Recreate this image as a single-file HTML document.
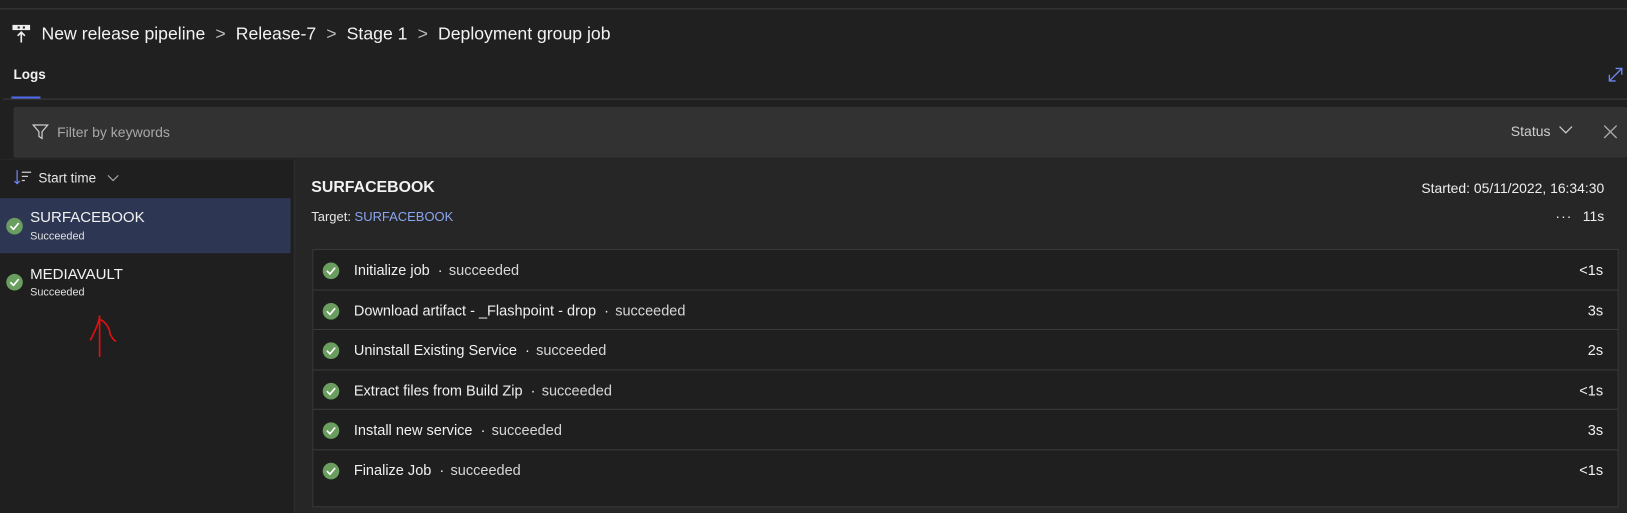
<!DOCTYPE html>
<html><head><meta charset="utf-8"><style>
*{box-sizing:border-box;margin:0;padding:0}
body{width:1627px;height:510px;background:#202020;font-family:"Segoe UI","Liberation Sans",sans-serif;color:#e6e6e6;overflow:hidden}
#c{position:relative;width:1568px;height:492px;transform:scale(1.03763);transform-origin:0 0}
.abs{position:absolute}
.ck{position:absolute;width:16px;height:16px;border-radius:50%;background:#6a9e5f}
.ck svg{position:absolute;left:3px;top:4px}
.row{position:absolute;left:302px;width:1257px;height:38.5px;border-bottom:1px solid #3a3a3a}
.row .n{position:absolute;left:39px;top:11px;font-size:14px;color:#f0f0f0}
.row .n span{color:#d6d6d6;margin-left:6px}
.row .t{position:absolute;right:14px;top:11px;font-size:14px;color:#f0f0f0}
.row .ck{left:9px;top:12px}
</style></head><body><div id="c">
<div class="abs" style="left:0;top:8px;width:1568px;height:1px;background:#3a3a3a"></div>
<svg class="abs" style="left:11px;top:23px" width="20" height="20" viewBox="0 0 20 20"><rect x="1" y="1" width="17" height="5" fill="#eee"/><rect x="6" y="2.5" width="2" height="2" fill="#202020"/><rect x="11" y="2.5" width="2" height="2" fill="#202020"/><path d="M9.5 18V8M6 11.5l3.5-3.5 3.5 3.5" stroke="#eee" stroke-width="1.6" fill="none"/></svg>
<div class="abs" style="left:40px;top:23px;font-size:17px;color:#f2f2f2;white-space:nowrap">New release pipeline <span style="color:#bbb;margin:0 5px">&gt;</span> Release-7 <span style="color:#bbb;margin:0 5px">&gt;</span> Stage 1 <span style="color:#bbb;margin:0 5px">&gt;</span> Deployment group job</div>
<div class="abs" style="left:13px;top:64px;font-size:13px;font-weight:bold;color:#f2f2f2">Logs</div>
<div class="abs" style="left:11px;top:93px;width:28px;height:2px;background:#4f6bed"></div>
<div class="abs" style="left:3px;top:95px;width:1565px;height:1px;background:#3c3c3c"></div>
<svg class="abs" style="left:1549px;top:64px" width="16" height="16" viewBox="0 0 16 16"><path d="M2 14L14 2M8 2h6v6M2 8v6h6" stroke="#6c86f0" stroke-width="1.3" fill="none"/></svg>
<div class="abs" style="left:13px;top:103px;width:1555px;height:49px;background:#323232;border-radius:2px"></div>
<svg class="abs" style="left:31px;top:119px" width="16" height="16" viewBox="0 0 16 16"><path d="M1 1.5h14L9.5 8v6.5L6.5 12.5V8z" stroke="#ccc" stroke-width="1.2" fill="none"/></svg>
<div class="abs" style="left:55px;top:120px;font-size:13.5px;color:#a8a8a8">Filter by keywords</div>
<div class="abs" style="left:1456px;top:119px;font-size:13.5px;color:#cfcfcf">Status</div>
<svg class="abs" style="left:1502px;top:120px" width="14" height="10" viewBox="0 0 14 10"><path d="M1 2l6 6 6-6" stroke="#ccc" stroke-width="1.2" fill="none"/></svg>
<svg class="abs" style="left:1545px;top:120px" width="14" height="14" viewBox="0 0 14 14"><path d="M1 1l12 12M13 1L1 13" stroke="#aaa" stroke-width="1.3"/></svg>
<div class="abs" style="left:0;top:153px;width:1568px;height:1px;background:#2a2a2a"></div>
<div class="abs" style="left:0;top:154px;width:283px;height:340px;background:#1f1f1f"></div>
<div class="abs" style="left:283px;top:154px;width:2px;height:340px;background:#2c2c2c"></div>
<svg class="abs" style="left:13px;top:163px" width="18" height="16" viewBox="0 0 18 16"><path d="M3.5 1v13M1 11.5l2.5 2.5 2.5-2.5" stroke="#6c86f0" stroke-width="1.2" fill="none"/><path d="M8 3h9M8 7h6M8 11h3" stroke="#ccc" stroke-width="1.2"/></svg>
<div class="abs" style="left:37px;top:164px;font-size:13px;color:#e6e6e6">Start time</div>
<svg class="abs" style="left:103px;top:168px" width="12" height="8" viewBox="0 0 12 8"><path d="M1 1l5 5 5-5" stroke="#aaa" stroke-width="1.1" fill="none"/></svg>
<div class="abs" style="left:0;top:191px;width:280px;height:53px;background:#2d3753"></div>
<div class="ck" style="left:6px;top:210px"><svg width="10" height="8" viewBox="0 0 10 8"><path d="M1 4l3 3 5-6" stroke="#fff" stroke-width="1.6" fill="none"/></svg></div>
<div class="abs" style="left:29px;top:202px;font-size:14.5px;color:#f2f2f2">SURFACEBOOK</div>
<div class="abs" style="left:29px;top:222px;font-size:10.5px;color:#e0e0e0">Succeeded</div>
<div class="ck" style="left:6px;top:264px"><svg width="10" height="8" viewBox="0 0 10 8"><path d="M1 4l3 3 5-6" stroke="#fff" stroke-width="1.6" fill="none"/></svg></div>
<div class="abs" style="left:29px;top:257px;font-size:14.5px;color:#f2f2f2">MEDIAVAULT</div>
<div class="abs" style="left:29px;top:276px;font-size:10.5px;color:#e0e0e0">Succeeded</div>
<svg class="abs" style="left:86px;top:302px" width="50" height="50" viewBox="0 0 50 50"><path d="M10 2v40M1 26C5 18 9 10 10 3M11 6c6 3 9 10 9 14 2 3 3 6 6 7" stroke="#e01010" stroke-width="1.6" fill="none"/></svg>
<div class="abs" style="left:285px;top:154px;width:1283px;height:340px;background:#262626"></div>
<div class="abs" style="left:300px;top:172px;font-size:15.3px;font-weight:bold;color:#f2f2f2">SURFACEBOOK</div>
<div class="abs" style="left:300px;top:202px;font-size:12.5px;color:#e6e6e6">Target: <span style="color:#8aa6f0">SURFACEBOOK</span></div>
<div class="abs" style="right:22px;top:174px;font-size:13.4px;color:#eee">Started: 05/11/2022, 16:34:30</div>
<div class="abs" style="right:22px;top:201px;font-size:13.4px;color:#eee"><span style="margin-right:10px;letter-spacing:1px">···</span>11s</div>
<div class="abs" style="left:301px;top:240px;width:1259px;height:249px;background:#1f1f1f;border:1px solid #3a3a3a"></div>
<div class="row" style="top:241px"><div class="ck"><svg width="10" height="8" viewBox="0 0 10 8"><path d="M1 4l3 3 5-6" stroke="#fff" stroke-width="1.6" fill="none"/></svg></div><div class="n">Initialize job &nbsp;·<span>succeeded</span></div><div class="t">&lt;1s</div></div>
<div class="row" style="top:279.5px"><div class="ck"><svg width="10" height="8" viewBox="0 0 10 8"><path d="M1 4l3 3 5-6" stroke="#fff" stroke-width="1.6" fill="none"/></svg></div><div class="n">Download artifact - _Flashpoint - drop &nbsp;·<span>succeeded</span></div><div class="t">3s</div></div>
<div class="row" style="top:318px"><div class="ck"><svg width="10" height="8" viewBox="0 0 10 8"><path d="M1 4l3 3 5-6" stroke="#fff" stroke-width="1.6" fill="none"/></svg></div><div class="n">Uninstall Existing Service &nbsp;·<span>succeeded</span></div><div class="t">2s</div></div>
<div class="row" style="top:356.5px"><div class="ck"><svg width="10" height="8" viewBox="0 0 10 8"><path d="M1 4l3 3 5-6" stroke="#fff" stroke-width="1.6" fill="none"/></svg></div><div class="n">Extract files from Build Zip &nbsp;·<span>succeeded</span></div><div class="t">&lt;1s</div></div>
<div class="row" style="top:395px"><div class="ck"><svg width="10" height="8" viewBox="0 0 10 8"><path d="M1 4l3 3 5-6" stroke="#fff" stroke-width="1.6" fill="none"/></svg></div><div class="n">Install new service &nbsp;·<span>succeeded</span></div><div class="t">3s</div></div>
<div class="row" style="top:433.5px;border-bottom:none"><div class="ck"><svg width="10" height="8" viewBox="0 0 10 8"><path d="M1 4l3 3 5-6" stroke="#fff" stroke-width="1.6" fill="none"/></svg></div><div class="n">Finalize Job &nbsp;·<span>succeeded</span></div><div class="t">&lt;1s</div></div>
</div></body></html>
